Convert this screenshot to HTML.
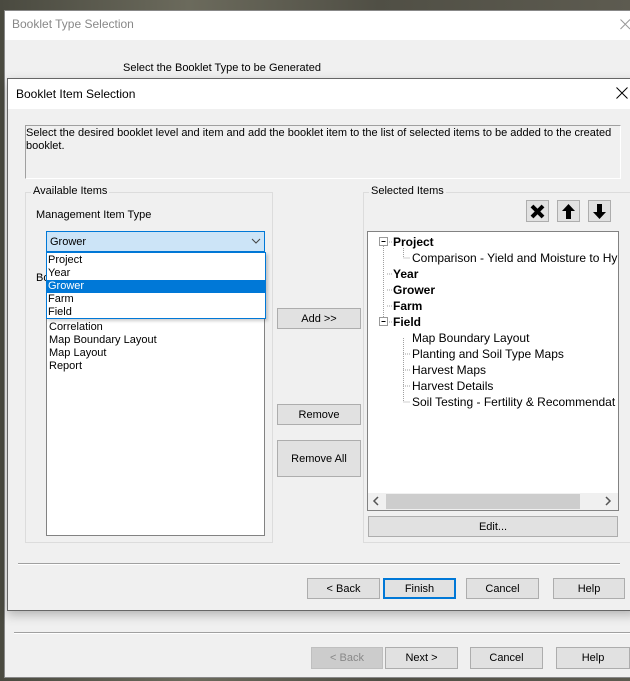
<!DOCTYPE html>
<html><head><meta charset="utf-8"><style>
*{box-sizing:border-box;margin:0;padding:0}
body{width:630px;height:681px;overflow:hidden;position:relative;font-family:"Liberation Sans",sans-serif;font-size:11px;color:#000;background:linear-gradient(90deg,#4a4a40,#6b6a5c 30%,#504f45 60%,#5d5b50);}
.a{position:absolute}
.btn{position:absolute;background:#e1e1e1;border:1px solid #adadad;text-align:center;font-size:11px;display:flex;align-items:center;justify-content:center}
.t{position:absolute;white-space:nowrap}
</style></head><body>
<div class="a" style="left:4px;top:10px;width:630px;height:668px;background:#f0f0f0;border:1px solid #888"></div>
<div class="a" style="left:5px;top:11px;width:625px;height:29px;background:#fff"></div>
<div class="t" style="left:12px;top:17px;font-size:12px;color:#888">Booklet Type Selection</div>
<svg class="a" style="left:620px;top:19px" width="11" height="11"><path d="M0.5 0.5L10 10M10 0.5L0.5 10" stroke="#999" stroke-width="1"/></svg>
<div class="t" style="left:123px;top:62px">Select the Booklet Type to be Generated</div>
<div class="a" style="left:14px;top:632px;width:616px;height:1px;background:#a0a0a0"></div>
<div class="a" style="left:14px;top:633px;width:616px;height:1px;background:#fff"></div>
<div class="btn" style="left:311px;top:647px;width:72px;height:22px;background:#ccc;border-color:#bfbfbf;color:#888">&lt; Back</div>
<div class="btn" style="left:385px;top:647px;width:73px;height:22px">Next &gt;</div>
<div class="btn" style="left:470px;top:647px;width:73px;height:22px">Cancel</div>
<div class="btn" style="left:556px;top:647px;width:74px;height:22px">Help</div>

<div class="a" style="left:7px;top:78px;width:630px;height:533px;background:#f0f0f0;border:1px solid #666;box-shadow:0 4px 10px rgba(0,0,0,.25)"></div>
<div class="a" style="left:8px;top:79px;width:622px;height:30px;background:#fff"></div>
<div class="t" style="left:16px;top:87px;font-size:12px">Booklet Item Selection</div>
<svg class="a" style="left:616px;top:87px" width="12" height="12"><path d="M0.5 0.5L11.5 11.5M11.5 0.5L0.5 11.5" stroke="#000" stroke-width="1"/></svg>
<div class="a" style="left:25px;top:125px;width:596px;height:54px;border:1px solid #a0a0a0;border-right-color:#fff;border-bottom-color:#fff"></div>
<div class="t" style="left:26px;top:127px;white-space:normal;width:590px;line-height:13px">Select the desired booklet level and item and add the booklet item to the list of selected items to be added to the created booklet.</div>

<div class="a" style="left:25px;top:192px;width:248px;height:351px;border:1px solid #dcdcdc"></div>
<div class="t" style="left:31px;top:185px;background:#f0f0f0;padding:0 2px">Available Items</div>
<div class="t" style="left:36px;top:209px">Management Item Type</div>
<div class="t" style="left:36px;top:272px">Bo</div>
<div class="a" style="left:46px;top:317px;width:219px;height:219px;background:#fff;border:1px solid #828282"></div>
<div class="t" style="left:49px;top:321px">Correlation</div>
<div class="t" style="left:49px;top:334px">Map Boundary Layout</div>
<div class="t" style="left:49px;top:347px">Map Layout</div>
<div class="t" style="left:49px;top:360px">Report</div>
<div class="a" style="left:46px;top:231px;width:219px;height:21px;background:#cce4f7;border:1px solid #0078d7"></div>
<div class="t" style="left:50px;top:236px">Grower</div>
<svg class="a" style="left:251px;top:238px" width="10" height="7"><path d="M1 1 L5 5 L9 1" fill="none" stroke="#444" stroke-width="1"/></svg>
<div class="a" style="left:46px;top:252px;width:220px;height:67px;background:#fff;border:1px solid #0078d7;box-shadow:2px 2px 3px rgba(0,0,0,.2)"></div>
<div class="t" style="left:48px;top:254px">Project</div>
<div class="t" style="left:48px;top:267px">Year</div>
<div class="a" style="left:47px;top:280px;width:218px;height:13px;background:#0078d7"></div>
<div class="t" style="left:48px;top:280px;color:#fff">Grower</div>
<div class="t" style="left:48px;top:293px">Farm</div>
<div class="t" style="left:48px;top:306px">Field</div>

<div class="btn" style="left:277px;top:308px;width:84px;height:21px">Add &gt;&gt;</div>
<div class="btn" style="left:277px;top:404px;width:84px;height:21px">Remove</div>
<div class="btn" style="left:277px;top:440px;width:84px;height:37px">Remove All</div>

<div class="a" style="left:363px;top:192px;width:270px;height:351px;border:1px solid #dcdcdc"></div>
<div class="t" style="left:369px;top:185px;background:#f0f0f0;padding:0 2px">Selected Items</div>
<div class="btn" style="left:526px;top:200px;width:23px;height:22px"><svg width="17" height="17"><path d="M3 3L14 14M14 3L3 14" stroke="#000" stroke-width="4"/></svg></div>
<div class="btn" style="left:557px;top:200px;width:23px;height:22px"><svg width="15" height="17"><path d="M7.5 1L14 8H10V16H5V8H1Z" fill="#000"/></svg></div>
<div class="btn" style="left:588px;top:200px;width:23px;height:22px"><svg width="15" height="17"><path d="M7.5 16L14 9H10V1H5V9H1Z" fill="#000"/></svg></div>
<div class="a" style="left:367px;top:231px;width:252px;height:280px;background:#fff;border:1px solid #828282"></div>
<svg class="a" style="left:368px;top:232px" width="250" height="262" font-family="Liberation Sans, sans-serif" font-size="12">
<g stroke="#a0a0a0" stroke-dasharray="1,1" fill="none">
<path d="M15.5 14V90M19 10H24M19 42H24M19 58H24M19 74H24M19 90H24M35.5 16V26H42M35.5 106V170H42M35 122H42M35 138H42M35 154H42"/>
</g>
<rect x="11.5" y="5.5" width="8" height="8" fill="#fff" stroke="#999"/><path d="M13.5 9.5H17.5" stroke="#000"/>
<rect x="11.5" y="85.5" width="8" height="8" fill="#fff" stroke="#999"/><path d="M13.5 89.5H17.5" stroke="#000"/>
<g font-weight="bold"><text x="25" y="14">Project</text><text x="25" y="46">Year</text><text x="25" y="62">Grower</text><text x="25" y="78">Farm</text><text x="25" y="94">Field</text></g>
<text x="44" y="30">Comparison - Yield and Moisture to Hy</text>
<text x="44" y="110">Map Boundary Layout</text>
<text x="44" y="126">Planting and Soil Type Maps</text>
<text x="44" y="142">Harvest Maps</text>
<text x="44" y="158">Harvest Details</text>
<text x="44" y="174">Soil Testing - Fertility &amp; Recommendat</text>
</svg>
<div class="a" style="left:368px;top:493px;width:250px;height:17px;background:#f0f0f0"></div>
<div class="a" style="left:386px;top:494px;width:194px;height:15px;background:#cdcdcd"></div>
<svg class="a" style="left:372px;top:496px" width="8" height="10"><path d="M6 1L2 5L6 9" fill="none" stroke="#555" stroke-width="1.5"/></svg>
<svg class="a" style="left:604px;top:496px" width="8" height="10"><path d="M2 1L6 5L2 9" fill="none" stroke="#555" stroke-width="1.5"/></svg>
<div class="btn" style="left:368px;top:516px;width:250px;height:21px">Edit...</div>

<div class="a" style="left:18px;top:563px;width:602px;height:1px;background:#a0a0a0"></div>
<div class="a" style="left:18px;top:564px;width:602px;height:1px;background:#fff"></div>
<div class="btn" style="left:307px;top:578px;width:73px;height:21px">&lt; Back</div>
<div class="btn" style="left:383px;top:578px;width:73px;height:21px;border:2px solid #0078d7">Finish</div>
<div class="btn" style="left:466px;top:578px;width:73px;height:21px">Cancel</div>
<div class="btn" style="left:553px;top:578px;width:72px;height:21px">Help</div>
</body></html>
